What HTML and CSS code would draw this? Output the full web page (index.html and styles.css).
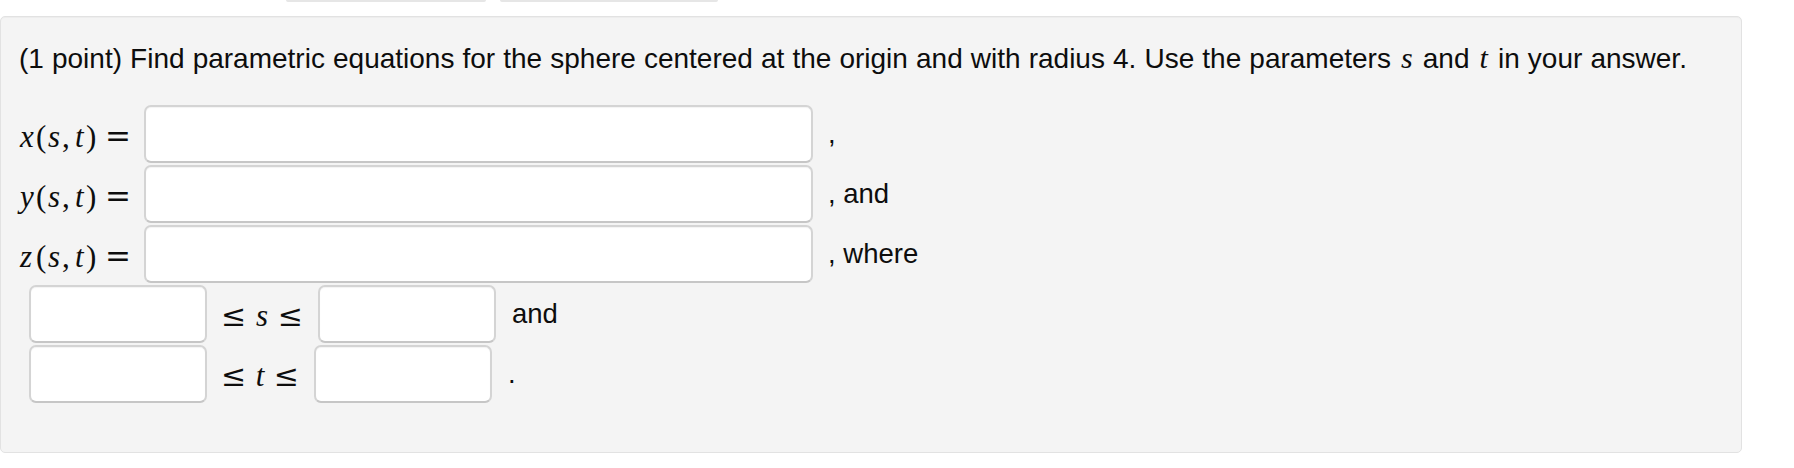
FILE: index.html
```html
<!DOCTYPE html>
<html>
<head>
<meta charset="utf-8">
<link rel="stylesheet" href="styles.css">
</head>
<body>
<div class="tabs"><span class="tab tab-a"></span><span class="tab tab-b"></span></div>
<div class="well">
  <p class="question">(1 point) Find parametric equations for the sphere centered at the origin and with radius 4. Use the parameters <span class="mv">s</span> and <span class="mv">t</span> in your answer.</p>
  <div class="rows">
    <div class="row">
      <span class="lbl"><span class="mv v-x">x</span><span class="mp">(</span><span class="mv v-s">s</span><span class="mc">,</span><span class="mv v-t">t</span><span class="mp">)</span><span class="meq">=</span></span>
      <input class="ans big" type="text">
      <span class="after">,</span>
    </div>
    <div class="row">
      <span class="lbl"><span class="mv v-x">y</span><span class="mp">(</span><span class="mv v-s">s</span><span class="mc">,</span><span class="mv v-t">t</span><span class="mp">)</span><span class="meq">=</span></span>
      <input class="ans big" type="text">
      <span class="after">, and</span>
    </div>
    <div class="row">
      <span class="lbl"><span class="mv v-x">z</span><span class="mp">(</span><span class="mv v-s">s</span><span class="mc">,</span><span class="mv v-t">t</span><span class="mp">)</span><span class="meq">=</span></span>
      <input class="ans big" type="text">
      <span class="after">, where</span>
    </div>
    <div class="row range">
      <input class="ans small" type="text">
      <span class="rel"><span class="le">≤</span><span class="mv rv">s</span><span class="le">≤</span></span>
      <input class="ans small" type="text">
      <span class="after">and</span>
    </div>
    <div class="row range">
      <input class="ans small" type="text">
      <span class="rel rel-t"><span class="le">≤</span><span class="mv rv">t</span><span class="le">≤</span></span>
      <input class="ans small" type="text">
      <span class="after">.</span>
    </div>
  </div>
</div>
</body>
</html>
```

FILE: styles.css
```css
html, body {
  margin: 0;
  padding: 0;
  background: #ffffff;
}

body {
  font-family: "Liberation Sans", Arial, sans-serif;
  color: #0d0d0d;
}

.tabs {
  height: 16px;
  display: flex;
  gap: 14px;
  padding-left: 286px;
}

.tab {
  display: block;
  height: 2px;
  background: #e6e6e6;
  border-radius: 0 0 4px 4px;
}

.tab-a { width: 200px; }
.tab-b { width: 218px; }

.well {
  box-sizing: border-box;
  width: 1742px;
  background: #f4f4f4;
  border: 1px solid #e2e2e2;
  border-radius: 5px;
  box-shadow: inset 0 1px 1px rgba(0, 0, 0, 0.03);
  padding: 22px 18px 49px 18px;
}

.question {
  margin: 0 0 27px 0;
  font-size: 28px;
  line-height: 38px;
  word-spacing: 0.3px;
}

.mv {
  font-family: "Liberation Serif", "Times New Roman", serif;
  font-style: italic;
}

.question .mv {
  font-size: 30px;
  padding: 0 2px;
}

.rows {
  display: flex;
  flex-direction: column;
  gap: 2px;
}

.row {
  display: flex;
  align-items: center;
  height: 58px;
}

.lbl {
  flex: 0 0 125px;
  display: flex;
  align-items: baseline;
  font-family: "Liberation Serif", "Times New Roman", serif;
  font-size: 31px;
  padding-left: 1px;
  padding-top: 4px;
  box-sizing: border-box;
}

.v-x { width: 16px; }
.mp { width: 11px; }
.v-s { width: 15px; padding-left: 1px; box-sizing: border-box; }
.mc { width: 13px; }
.v-t { width: 11px; }
.meq {
  font-family: "DejaVu Serif", serif;
  font-size: 31px;
  margin-left: 8px;
}

.ans {
  box-sizing: border-box;
  height: 58px;
  margin: 0;
  padding: 0 10px;
  background: #ffffff;
  border: 2px solid #d4d4d4;
  border-bottom-color: #c6c6c6;
  border-radius: 7px;
  box-shadow: inset 0 1px 1px rgba(0, 0, 0, 0.05);
  font-size: 24px;
  outline: none;
}

.big {
  width: 669px;
}

.small {
  width: 178px;
}

.range .ans:first-child {
  margin-left: 10px;
}

.after {
  margin-left: 15px;
  font-size: 27.5px;
}

.range .after {
  margin-left: 16px;
}

.rel {
  display: flex;
  align-items: baseline;
  width: 82px;
  margin: 0 15px 0 14px;
  justify-content: space-between;
  font-family: "DejaVu Serif", serif;
  font-size: 30px;
  padding-top: 4px;
}

.rel-t {
  width: 78px;
}

.rel .rv {
  font-family: "Liberation Serif", serif;
  font-size: 31px;
}
```
